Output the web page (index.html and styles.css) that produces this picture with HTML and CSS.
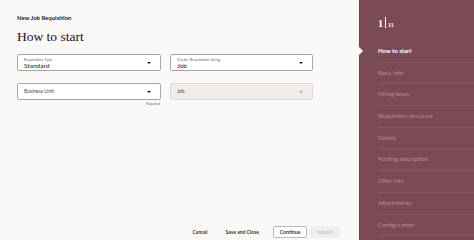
FILE: index.html
```html
<!DOCTYPE html>
<html lang="en">
<head>
<meta charset="utf-8">
<title>New Job Requisition</title>
<link rel="stylesheet" href="styles.css">
</head>
<body>
<div class="page">
  <main class="main">
    <div class="eyebrow">New Job Requisition</div>
    <h1 class="title">How to start</h1>
    <div class="form">
      <div class="cell">
        <div class="field">
          <div class="field-text">
            <span class="label">Requisition Type</span>
            <span class="value">Standard</span>
          </div>
          <span class="caret"></span>
        </div>
      </div>
      <div class="cell">
        <div class="field">
          <div class="field-text">
            <span class="label">Create Requisition Using</span>
            <span class="value">Job</span>
          </div>
          <span class="caret"></span>
        </div>
      </div>
      <div class="cell">
        <div class="field">
          <div class="field-text">
            <span class="placeholder">Business Unit</span>
          </div>
          <span class="caret"></span>
        </div>
        <div class="required">Required</div>
      </div>
      <div class="cell">
        <div class="field disabled">
          <div class="field-text">
            <span class="placeholder">Job</span>
          </div>
          <span class="caret light"></span>
        </div>
      </div>
    </div>
    <div class="footer">
      <button class="btn link">Cancel</button>
      <button class="btn link">Save and Close</button>
      <button class="btn outline">Continue</button>
      <button class="btn disabled-btn">Submit</button>
    </div>
  </main>
  <aside class="side">
    <div class="counter"><span class="cur">1</span><span class="bar"></span><span class="tot">11</span></div>
    <ul class="steps">
      <li class="step active">How to start</li>
      <li class="step">Basic info</li>
      <li class="step">Hiring team</li>
      <li class="step">Requisition structure</li>
      <li class="step">Details</li>
      <li class="step">Posting description</li>
      <li class="step">Offer info</li>
      <li class="step">Attachments</li>
      <li class="step">Configuration</li>
    </ul>
  </aside>
</div>
</body>
</html>
```
FILE: styles.css
```css
* { box-sizing: border-box; }
html, body { margin: 0; padding: 0; }
body {
  width: 474px;
  height: 240px;
  overflow: hidden;
  font-family: Lato, "Open Sans", "Liberation Sans", sans-serif;
  color: #161513;
  background: #fbf9f8;
}
.page {
  display: flex;
  height: 240px;
}
.main {
  flex: 1;
  display: flex;
  flex-direction: column;
  padding: 14px 19px 0 17px;
  background: #fbf9f8;
}
.eyebrow {
  font-size: 6px;
  font-weight: 700;
  line-height: 8px;
  color: #201e1c;
}
.title {
  margin: 7px 0 0;
  font-family: "Liberation Serif", "DejaVu Serif", serif;
  font-weight: 400;
  font-size: 13.5px;
  line-height: 16px;
  color: #161513;
}
.form {
  margin-top: 9px;
  display: grid;
  grid-template-columns: 144px 143px;
  column-gap: 9px;
  row-gap: 12px;
  align-items: start;
}
.cell { position: relative; }
.field {
  height: 17px;
  border: 1px solid #a9a5a1;
  border-radius: 2px;
  background: #fff;
  display: flex;
  align-items: center;
  padding: 0 9px 0 6px;
}
.field.disabled {
  background: #efecea;
  border-color: #dedad7;
}
.field-text {
  flex: 1;
  display: flex;
  flex-direction: column;
  justify-content: center;
}
.label {
  font-size: 4px;
  line-height: 5px;
  color: #6f6c69;
}
.value {
  font-size: 6.5px;
  line-height: 7px;
  color: #161513;
}
.placeholder {
  font-size: 5px;
  line-height: 7px;
  color: #4e4b48;
}
.caret {
  width: 0;
  height: 0;
  border-left: 2px solid transparent;
  border-right: 2px solid transparent;
  border-top: 2px solid #161513;
}
.caret.light { border-top-color: #a9a5a1; }
.required {
  position: absolute;
  right: 1px;
  top: 19px;
  font-size: 3.5px;
  line-height: 4px;
  color: #6f6c69;
}
.footer {
  margin-top: auto;
  display: flex;
  justify-content: flex-end;
  align-items: center;
  gap: 3px;
  padding-bottom: 1px;
  height: 16px;
}
.btn {
  font-family: Lato, "Open Sans", "Liberation Sans", sans-serif;
  font-size: 5px;
  font-weight: 700;
  height: 12px;
  padding: 0 6px;
  border-radius: 2px;
  background: transparent;
  border: 1px solid transparent;
  color: #3a3734;
  cursor: pointer;
}
.btn.link { margin-right: 7px; padding: 0 3px; }
.btn.outline {
  border-color: #bdb8b4;
  background: #fff;
  padding: 0 6px;
}
.btn.disabled-btn {
  background: #f1efed;
  border-color: #f1efed;
  color: #c8c4c0;
  padding: 0 6px;
}
.side {
  width: 115px;
  position: relative;
  background: #7b4a57;
  padding: 17px 0 0 18px;
  border-left: 1px solid #6e3f4c;
}
.side::before {
  content: "";
  position: absolute;
  left: -1px;
  top: 47px;
  width: 0;
  height: 0;
  border-top: 4px solid transparent;
  border-bottom: 4px solid transparent;
  border-left: 4px solid #fbf9f8;
}
.counter {
  display: flex;
  align-items: flex-end;
  height: 12px;
  color: #fff;
  font-family: "Liberation Serif", "DejaVu Serif", serif;
}
.cur { font-size: 10px; font-weight: 700; line-height: 10px; }
.bar {
  width: 1px;
  height: 11px;
  background: #fff;
  margin: 0 2px 0 2px;
  align-self: flex-start;
}
.tot { font-size: 6px; font-weight: 700; line-height: 7px; }
.steps {
  list-style: none;
  margin: 12px 0 0;
  padding: 0;
}
.step {
  height: 21.7px;
  line-height: 20.7px;
  font-size: 6px;
  color: #b48d97;
  border-bottom: 1px solid #8b5a67;
}
.step.active {
  color: #fff;
  font-weight: 700;
}
```
